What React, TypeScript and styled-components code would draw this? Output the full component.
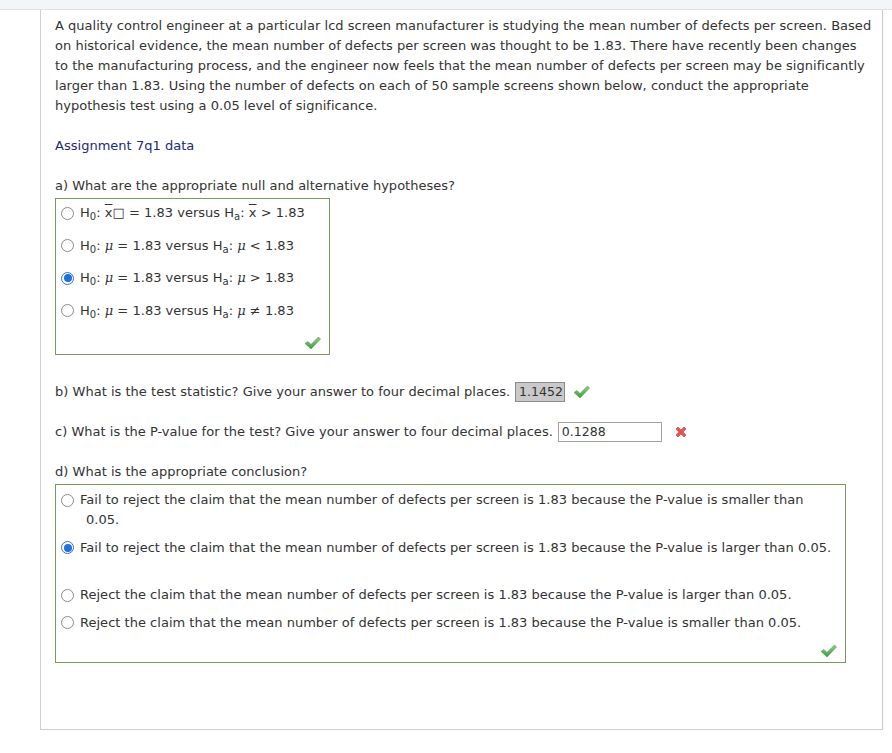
import React from "react";
import styled, { createGlobalStyle } from "styled-components";

const Global = createGlobalStyle`
  html, body { margin: 0; padding: 0; background: #fff; }
  body { font-family: "DejaVu Sans", Verdana, sans-serif; font-size: 13px; color: #333; letter-spacing: 0.02px; }
`;

const TopBar = styled.div`
  height: 9px;
  background: #f4f5f7;
  border-bottom: 1px solid #e2e2e2;
`;

const Card = styled.div`
  box-sizing: border-box;
  margin-left: 40px;
  width: 843px;
  height: 720px;
  border: 1px solid #cfcfcf;
  border-top: none;
  padding: 6px 14px 0 14px;
  line-height: 20px;
  box-shadow: 1px 1px 2px rgba(0,0,0,0.06);
`;

const Para = styled.p`
  margin: 0;
  width: 818px;
`;

const DataLink = styled.a`
  display: block;
  margin-top: 20px;
  color: #1c2a78;
  text-decoration: none;
`;

const Question = styled.div<{ $mt: number }>`
  margin-top: ${(p) => p.$mt}px;
`;

const Box = styled.div<{ $w: number; $gap: number; $pt: number }>`
  box-sizing: border-box;
  width: ${(p) => p.$w}px;
  margin-top: 2px;
  border: 1px solid #7a9a5c;
  padding: ${(p) => p.$pt}px 4px 4px 5px;
  display: flex;
  flex-direction: column;
  gap: ${(p) => p.$gap}px;
`;

const Option = styled.label`
  display: flex;
  align-items: flex-start;
  gap: 6px;
`;

const Radio = styled.span<{ $on?: boolean }>`
  flex: none;
  box-sizing: border-box;
  width: 13px;
  height: 13px;
  margin-top: 3.5px;
  border-radius: 50%;
  border: 1px solid ${(p) => (p.$on ? "#2f73d8" : "#8a8a8a")};
  background: #fff;
  position: relative;
  ${(p) =>
    p.$on
      ? `&::after { content: ""; position: absolute; left: 1.5px; top: 1.5px; width: 8px; height: 8px; border-radius: 50%; background: #1f6fe0; }`
      : ""}
`;

const OptText = styled.span`
  padding-left: 6px;
  text-indent: -6px;
`;

const Sub = styled.sub`
  font-size: 10px;
  vertical-align: -3px;
  line-height: 0;
`;

const Mu = styled.i`
  font-family: "DejaVu Serif", serif;
`;

const Bar = styled.span`
  text-decoration: overline;
`;

const CheckRow = styled.div<{ $mt: number }>`
  display: flex;
  justify-content: flex-end;
  padding-right: 4px;
  margin-top: ${(p) => p.$mt}px;
  height: 14px;
`;

const InlineRow = styled.div<{ $mt: number }>`
  display: flex;
  align-items: center;
  margin-top: ${(p) => p.$mt}px;
  height: 20px;
`;

const Field = styled.span<{ $w: number; $filled?: boolean }>`
  box-sizing: border-box;
  display: inline-block;
  width: ${(p) => p.$w}px;
  height: 20px;
  margin-left: 5px;
  padding: 0 3px;
  line-height: 18px;
  font-family: "DejaVu Sans", sans-serif;
  font-size: 12.5px;
  border: 1px solid ${(p) => (p.$filled ? "#8c8c8c" : "#a0a0a0")};
  background: ${(p) => (p.$filled ? "#c9c9c9" : "#fff")};
  color: #333;
`;

const Mark = styled.span<{ $ml: number }>`
  display: inline-flex;
  margin-left: ${(p) => p.$ml}px;
`;

const Check = () => (
  <svg width="17" height="14" viewBox="0 0 17 14">
    <defs>
      <linearGradient id="cg" x1="0" y1="0" x2="0" y2="1">
        <stop offset="0" stopColor="#8fd08a" />
        <stop offset="1" stopColor="#3f9a3f" />
      </linearGradient>
    </defs>
    <path d="M1 7.5 L4 5.5 L7 8.5 L14.5 1 L16.5 3 L7 13 Z" fill="url(#cg)" stroke="#4c9a46" strokeWidth="0.6" strokeLinejoin="round" />
  </svg>
);

const Cross = () => (
  <svg width="14" height="14" viewBox="0 0 14 14">
    <path d="M2 4 L4 2 L7 5 L10 2 L12 4 L9 7 L12 10 L10 12 L7 9 L4 12 L2 10 L5 7 Z" fill="#e35454" stroke="#c73a3a" strokeWidth="0.6" strokeLinejoin="round" />
  </svg>
);

const H0 = () => (
  <>
    H<Sub>0</Sub>:
  </>
);
const Ha = () => (
  <>
    H<Sub>a</Sub>:
  </>
);

export default function App() {
  return (
    <>
      <Global />
      <TopBar />
      <Card>
        <Para>
          A quality control engineer at a particular lcd screen manufacturer is studying the mean number of defects per screen. Based on historical evidence, the mean number of defects per screen was thought to be 1.83. There have recently been changes to the manufacturing process, and the engineer now feels that the mean number of defects per screen may be significantly larger than 1.83. Using the number of defects on each of 50 sample screens shown below, conduct the appropriate hypothesis test using a 0.05 level of significance.
        </Para>
        <DataLink href="#">Assignment 7q1 data</DataLink>

        <Question $mt={20}>a) What are the appropriate null and alternative hypotheses?</Question>
        <Box $w={275} $gap={12.5} $pt={4}>
          <Option>
            <Radio />
            <span>
              <H0 /> <Bar>x</Bar>□ = 1.83 versus <Ha /> <Bar>x</Bar> &gt; 1.83
            </span>
          </Option>
          <Option>
            <Radio />
            <span>
              <H0 /> <Mu>μ</Mu> = 1.83 versus <Ha /> <Mu>μ</Mu> &lt; 1.83
            </span>
          </Option>
          <Option>
            <Radio $on />
            <span>
              <H0 /> <Mu>μ</Mu> = 1.83 versus <Ha /> <Mu>μ</Mu> &gt; 1.83
            </span>
          </Option>
          <Option>
            <Radio />
            <span>
              <H0 /> <Mu>μ</Mu> = 1.83 versus <Ha /> <Mu>μ</Mu> ≠ 1.83
            </span>
          </Option>
          <CheckRow $mt={3}>
            <Check />
          </CheckRow>
        </Box>

        <InlineRow $mt={27}>
          b) What is the test statistic? Give your answer to four decimal places.
          <Field $w={50} $filled>1.1452</Field>
          <Mark $ml={8}>
            <Check />
          </Mark>
        </InlineRow>

        <InlineRow $mt={20}>
          c) What is the P-value for the test? Give your answer to four decimal places.
          <Field $w={104}>0.1288</Field>
          <Mark $ml={12}>
            <Cross />
          </Mark>
        </InlineRow>

        <Question $mt={20}>d) What is the appropriate conclusion?</Question>
        <Box $w={791} $gap={7.5} $pt={5}>
          <Option>
            <Radio />
            <OptText style={{ maxWidth: 745 }}>
              Fail to reject the claim that the mean number of defects per screen is 1.83 because the P-value is smaller than 0.05.
            </OptText>
          </Option>
          <Option>
            <Radio $on />
            <OptText>
              Fail to reject the claim that the mean number of defects per screen is 1.83 because the P-value is larger than 0.05.
              <br />
              &nbsp;
            </OptText>
          </Option>
          <Option>
            <Radio />
            <OptText>
              Reject the claim that the mean number of defects per screen is 1.83 because the P-value is larger than 0.05.
            </OptText>
          </Option>
          <Option>
            <Radio />
            <OptText>
              Reject the claim that the mean number of defects per screen is 1.83 because the P-value is smaller than 0.05.
            </OptText>
          </Option>
          <CheckRow $mt={4}>
            <Check />
          </CheckRow>
        </Box>
      </Card>
    </>
  );
}
